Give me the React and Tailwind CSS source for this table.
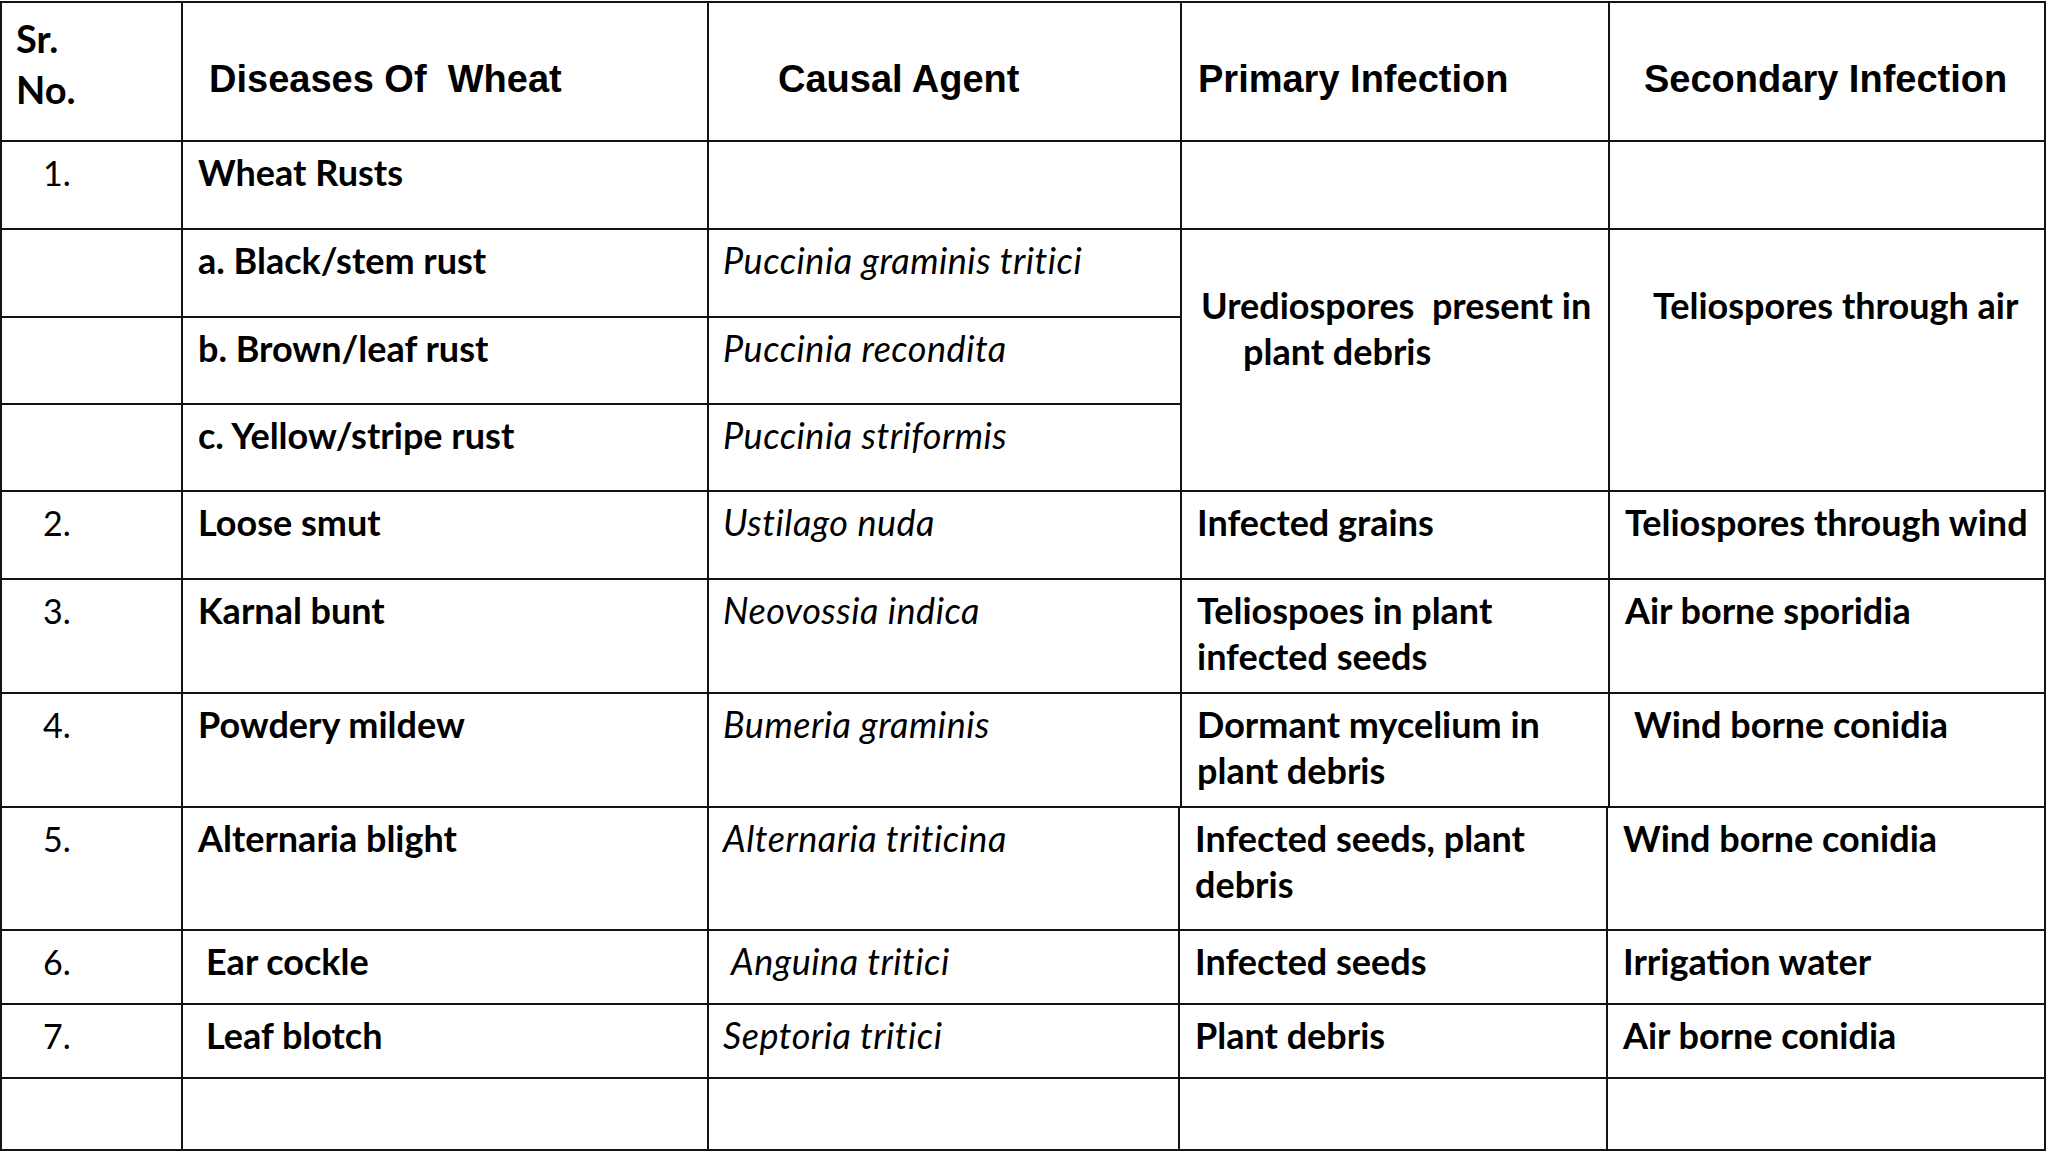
import React from 'react'

const head = "font-['Liberation_Sans',Arial,sans-serif] font-bold text-[38px] leading-[44px] text-black"
const bold = "font-['Lato',sans-serif] font-bold text-[36px] leading-[46px] text-black"
const ital = "font-['Lato',sans-serif] italic text-[36px] leading-[46px] tracking-[0.5px] text-black"
const num = "font-['Lato',sans-serif] text-[34px] leading-[46px] text-black"

// rows 1..4 share the first grid, rows 5..8 sit on a grid whose lines are 2px to the left
const topRows = [
  { no: '1.', name: 'Wheat Rusts' },
  { sub: true, name: 'a. Black/stem rust', agent: 'Puccinia graminis tritici' },
  { sub: true, name: 'b. Brown/leaf rust', agent: 'Puccinia recondita' },
  { sub: true, name: 'c. Yellow/stripe rust', agent: 'Puccinia striformis' },
  { no: '2.', name: 'Loose smut', agent: 'Ustilago nuda', primary: ['Infected grains'], secondary: 'Teliospores through wind' },
  { no: '3.', name: 'Karnal bunt', agent: 'Neovossia indica', primary: ['Teliospoes in plant', 'infected seeds'], secondary: 'Air borne sporidia' },
  { no: '4.', name: 'Powdery mildew', agent: 'Bumeria graminis', primary: ['Dormant mycelium in', 'plant debris'], secondary: 'Wind borne conidia', secPad: 'pl-[24px]' },
]

const bottomRows = [
  { no: '5.', name: 'Alternaria blight', agent: 'Alternaria triticina', primary: ['Infected seeds, plant', 'debris'], secondary: 'Wind borne conidia' },
  { no: '6.', name: 'Ear cockle', namePad: 'pl-[23px]', agent: 'Anguina tritici', agentPad: 'pl-[22px]', primary: ['Infected seeds'], secondary: 'Irrigation water' },
  { no: '7.', name: 'Leaf blotch', namePad: 'pl-[23px]', agent: 'Septoria tritici', primary: ['Plant debris'], secondary: 'Air borne conidia' },
  { empty: true },
]

function Cell({ className = '', children }) {
  return <div className={`bg-white overflow-hidden ${className}`}>{children}</div>
}

function Row({ row }) {
  if (row.empty) {
    return (
      <>
        <Cell /><Cell /><Cell /><Cell /><Cell />
      </>
    )
  }
  return (
    <>
      <Cell className="pl-[41px] pt-[8px]">
        <p className={num}>{row.no}</p>
      </Cell>
      <Cell className={`${row.namePad || 'pl-[15px]'} pt-[7px]`}>
        <p className={bold}>{row.name}</p>
      </Cell>
      <Cell className={`${row.agentPad || 'pl-[14px]'} pt-[7px]`}>
        {row.agent && <p className={ital}>{row.agent}</p>}
      </Cell>
      {!row.sub && (
        <>
          <Cell className="pl-[15px] pt-[7px]">
            {row.primary?.map((t) => (
              <p key={t} className={bold}>{t}</p>
            ))}
          </Cell>
          <Cell className={`${row.secPad || 'pl-[15px]'} pt-[7px]`}>
            {row.secondary && <p className={bold}>{row.secondary}</p>}
          </Cell>
        </>
      )}
    </>
  )
}

export default function App() {
  return (
    <div className="w-[2048px] h-[1152px] bg-white">
      <div className="w-[2046px] h-[1150px] mt-[1px] bg-[#141414] p-[2px] flex flex-col gap-[2px]">
        <div className="grid grid-cols-[179px_524px_471px_426px_434px] grid-rows-[137px_86px_86px_85px_85px_86px_112px_112px] gap-[2px]">
          {/* header */}
          <Cell className="pl-[14px] pt-[10px]">
            <p className="font-['Lato',sans-serif] font-bold text-[38px] leading-[51px] text-black">Sr.</p>
            <p className="font-['Lato',sans-serif] font-bold text-[38px] leading-[51px] text-black">No.</p>
          </Cell>
          <Cell className="pl-[26px] pt-[54px]">
            <p className={`${head} whitespace-pre`}>Diseases Of  Wheat</p>
          </Cell>
          <Cell className="pl-[69px] pt-[54px]">
            <p className={head}>Causal Agent</p>
          </Cell>
          <Cell className="pl-[16px] pt-[54px]">
            <p className={head}>Primary Infection</p>
          </Cell>
          <Cell className="pl-[34px] pt-[54px]">
            <p className={head}>Secondary Infection</p>
          </Cell>

          {/* row 1 */}
          <Row row={topRows[0]} />

          {/* rusts a-c, primary and secondary merged over three rows */}
          <Row row={topRows[1]} />
          <Cell className="row-span-3 pl-[19px] pt-[52px]">
            <p className={`${bold} whitespace-pre`}>Urediospores  present in</p>
            <p className={`${bold} pl-[42px]`}>plant debris</p>
          </Cell>
          <Cell className="row-span-3 pl-[43px] pt-[52px]">
            <p className={bold}>Teliospores through air</p>
          </Cell>
          <Row row={topRows[2]} />
          <Row row={topRows[3]} />

          {topRows.slice(4).map((r) => (
            <Row key={r.no} row={r} />
          ))}
        </div>

        <div className="grid grid-cols-[179px_524px_469px_426px_436px] grid-rows-[121px_72px_72px_70px] gap-[2px]">
          {bottomRows.map((r, i) => (
            <Row key={i} row={r} />
          ))}
        </div>
      </div>
    </div>
  )
}
